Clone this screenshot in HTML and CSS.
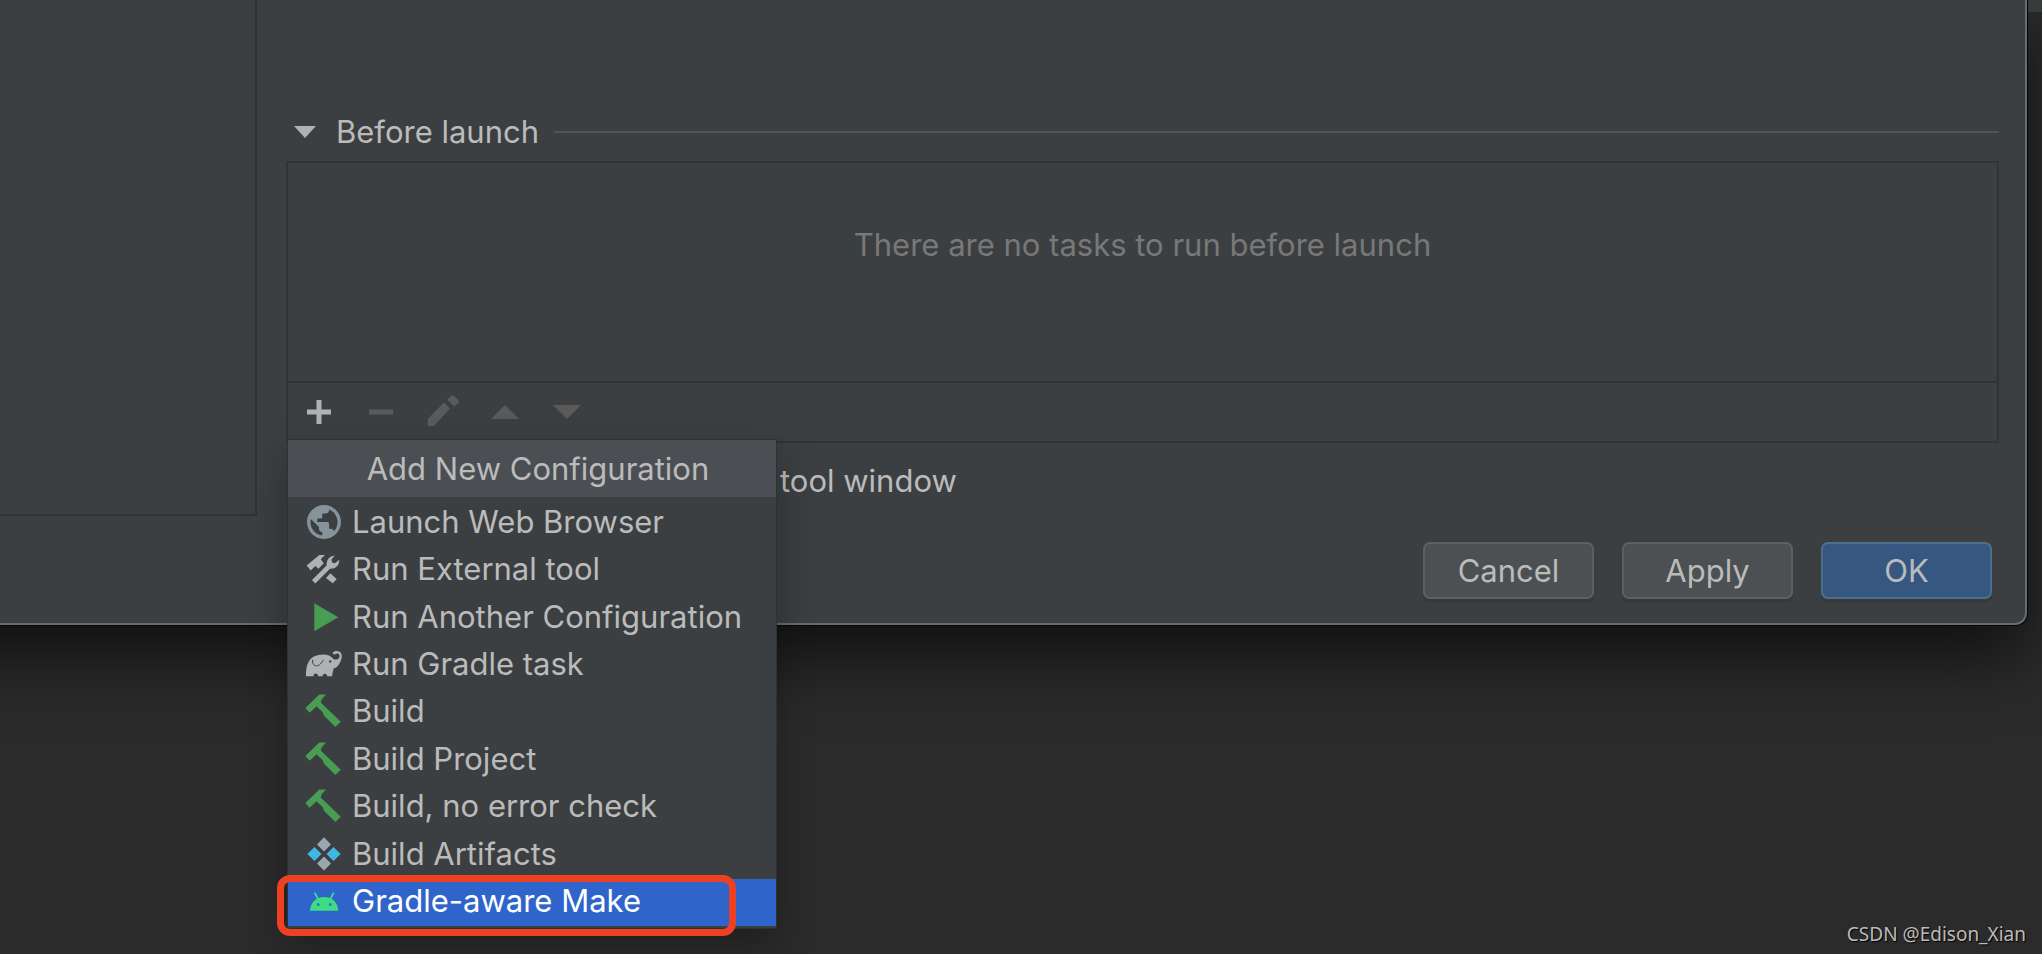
FILE: index.html
```html
<!DOCTYPE html>
<html lang="en">
<head>
    <meta charset="UTF-8">
    <meta name="viewport" content="width=device-width, initial-scale=1.0">
    <title>Run/Debug Configurations</title>
    <link rel="stylesheet" href="styles.css">
</head>
<body>

    <!-- Shared icons -->
    <svg class="sprite" aria-hidden="true">
        <symbol id="hammer" viewBox="0 0 38 38">
            <path d="M.3 16 14.3 2.4H21L16.5 7.6 15.7 10.4 25.7 20 35.7 29.7 30.3 35 19.3 24 17.5 20 11.5 14.3 4.6 20.7Z"/>
        </symbol>
    </svg>

    <main class="dialog">
        <div class="content">
            <div class="sidebar"></div>

            <div class="settings">
                <!-- Before launch -->
                <div class="section-title">
                    <svg class="arrow" viewBox="0 0 22 12"><path d="M0 0H22L11 12Z"/></svg>
                    <h2>Before launch</h2>
                    <span class="line"></span>
                </div>

                <div class="tasks">
                    <p class="empty">There are no tasks to run before launch</p>
                    <div class="toolbar">
                        <button class="tool" aria-label="Add">
                            <svg viewBox="0 0 38 38"><path d="M16.5 7h5v9.5H31v5h-9.5V31h-5v-9.5H7v-5h9.5Z"/></svg>
                        </button>
                        <button class="tool" aria-label="Remove" disabled>
                            <svg viewBox="0 0 38 38"><path d="M7 16.5H31v5H7Z"/></svg>
                        </button>
                        <button class="tool" aria-label="Edit" disabled>
                            <svg viewBox="0 0 38 38"><path d="M3.7 33V26L20 9.5 26 15.5 10 33ZM23 6.8 27 3Q28.5 2 30 3L34 6.5Q36 8.5 34 10L30.3 13.5Z"/></svg>
                        </button>
                        <button class="tool" aria-label="Up" disabled>
                            <svg viewBox="0 0 38 38"><path d="M5 26 19 12 33 26Z"/></svg>
                        </button>
                        <button class="tool" aria-label="Down" disabled>
                            <svg viewBox="0 0 38 38"><path d="M5 12H33L19 26Z"/></svg>
                        </button>

                        <!-- Add task popup -->
                        <div class="popup">
                            <div class="popup-title">Add New Configuration</div>
                            <div class="menu">
                                <button class="item">
                                    <svg class="globe" viewBox="0.8 0.8 22.4 22.4"><path d="M12 2C6.48 2 2 6.48 2 12s4.48 10 10 10 10-4.48 10-10S17.52 2 12 2zm-1 17.93c-3.95-.49-7-3.85-7-7.93 0-.62.08-1.21.21-1.79L9 15v1c0 1.1.9 2 2 2v1.93zm6.9-2.54c-.26-.81-1-1.39-1.9-1.39h-1v-3c0-.55-.45-1-1-1H8v-2h2c.55 0 1-.45 1-1V7h2c1.1 0 2-.9 2-2v-.41c2.93 1.19 5 4.06 5 7.41 0 2.08-.8 3.97-2.1 5.39z"/></svg>
                                    Launch Web Browser
                                </button>
                                <button class="item">
                                    <svg viewBox="0 0 38 38">
                                        <path d="M1.7 15.6 14.3 5H20L15.7 9.3 18.8 13.2 13.4 18.8 10.3 16 5.7 20.6ZM21 28 25.4 23.3 31.7 29.3 27.7 33.3Z"/>
                                        <path d="M7 30 21.6 15.4C21.4 10 24 6 29.8 5.4L26.5 9.5 27 12.5 30 13.3 34.2 9.8C34.6 15.5 30.5 19.2 25 18.8L10.3 33.5Z"/>
                                    </svg>
                                    Run External tool
                                </button>
                                <button class="item">
                                    <svg class="green" viewBox="0 0 38 38"><path d="M9.3 5.2 33.3 19.2 9.3 33.2Z"/></svg>
                                    Run Another Configuration
                                </button>
                                <button class="item">
                                    <svg viewBox="0 0 38 38">
                                        <path d="M1 31.3C.8 24.5 1.8 18 6 13.5 10 9.8 19 8.6 24 10.4 27 11.6 28 14.6 30.5 14.6 33.2 14.6 35 12.4 34.5 10.4 34 8.2 31.3 8 30.2 9.2 29 10 27.2 8.8 27.8 7.6 29 5.7 32.6 5.2 35 7 38 9.4 36.8 14 35 17.5 33.4 20.8 31.6 22.6 28.6 23.5L27 31.3H22.2C22.2 28 18 27.6 17.4 31.3H13.2C13 27.6 8.6 27.6 8.4 31.3Z"/>
                                        <path class="cut" d="M7.7 14.8C7 18 8.5 20.8 11.5 20.8 15 20.8 16.4 17.5 18.6 14.8"/>
                                        <circle class="dot" cx="25.2" cy="16.4" r="1.2"/>
                                    </svg>
                                    Run Gradle task
                                </button>
                                <button class="item"><svg class="green"><use href="#hammer"/></svg>Build</button>
                                <button class="item"><svg class="green"><use href="#hammer"/></svg>Build Project</button>
                                <button class="item"><svg class="green"><use href="#hammer"/></svg>Build, no error check</button>
                                <button class="item">
                                    <svg viewBox="0 0 38 38">
                                        <path class="grey" d="M19 2.3 26 9.4 19 16.5 12 9.4ZM19 21.5 26 28.4 19 35.5 12 28.4Z"/>
                                        <path class="blue" d="M9.5 12 16.5 19 9.5 26 2.3 19ZM28.5 12 35.6 19 28.5 26 21.5 19Z"/>
                                    </svg>
                                    Build Artifacts
                                </button>
                                <button class="item selected">
                                    <svg class="android" viewBox="0 0 38 38">
                                        <path d="M5 28.8C5.4 23.6 7.7 19.2 12 16.8L8.8 11 10.4 10.2 13.7 16C17.2 14.5 21.2 14.5 24.7 16L28 10.2 29.6 11 26.4 16.8C30.6 19.2 33 23.6 33.3 28.8Z"/>
                                        <path class="eyes" d="M12 21.3h2.4v2.4H12ZM24 21.3h2.4v2.4H24Z"/>
                                    </svg>
                                    Gradle-aware Make
                                </button>
                            </div>
                            <div class="marker"></div>
                        </div>
                    </div>
                </div>

                <p class="hint">tool window</p>
            </div>
        </div>

        <div class="footer">
            <button class="btn">Cancel</button>
            <button class="btn">Apply</button>
            <button class="btn primary">OK</button>
        </div>
    </main>

    <div class="watermark">CSDN @Edison_Xian</div>

</body>
</html>
```

FILE: styles.css
```css
* {
    margin: 0;
    padding: 0;
    box-sizing: border-box;
}
body {
    min-height: 100vh;
    display: flex;
    flex-direction: column;
    background: linear-gradient(#3c3f41 12px, #2b2b2b 12px);
    color: #bbbbbb;
    font-family: Inter, "Liberation Sans", sans-serif;
    font-size: 31px;
    line-height: 47px;
    overflow: hidden;
}
button {
    border: none;
    background: none;
    color: inherit;
    font: inherit;
}
svg {
    display: block;
    fill: #afb1b3;
}
.sprite {
    position: absolute;
    width: 0;
    height: 0;
}

/* Dialog, runs past the left edge of the window */
.dialog {
    margin: 0 15px 0 -100px;
    background: #3c3f41;
    border: solid #696b6c;
    border-width: 0 2px 2px 0;
    border-bottom-right-radius: 12px;
    box-shadow: 0 0 0 1px #080808, 0 30px 70px rgba(0, 0, 0, 0.65);
}
.content {
    display: flex;
}
.sidebar {
    width: 357px;
    border: solid #323232;
    border-width: 0 2px 2px 0;
}
.settings {
    flex: 1;
    padding: 108px 26px 12px 29px;
}
.section-title {
    display: flex;
    align-items: center;
    padding-left: 8px;
    margin-bottom: 6px;
}
.section-title h2 {
    margin: 0 15px 0 20px;
    font-size: 31px;
    font-weight: 400;
}
.arrow {
    width: 22px;
    height: 12px;
}
.line {
    flex: 1;
    height: 2px;
    background: #515355;
}
.tasks {
    border: 2px solid #323232;
}
.empty {
    height: 218px;
    padding-top: 58px;
    color: #787878;
    text-align: center;
}
.toolbar {
    position: relative;
    display: flex;
    align-items: center;
    height: 60px;
    border-top: 2px solid #323232;
}
.tool {
    display: flex;
    justify-content: center;
    width: 62px;
}
.tool svg {
    width: 38px;
    height: 38px;
}
.tool:disabled svg {
    fill: #5a5a5a;
}
.hint {
    padding: 14px 0 0 494px;
}

/* Popup menu */
.popup {
    position: absolute;
    top: 57px;
    left: 0;
    width: 488px;
    padding-bottom: 2px;
    background: #3c3f41;
    box-shadow: 0 0 0 1px #2f3132, 0 16px 36px rgba(0, 0, 0, 0.3);
}
.popup-title {
    height: 57px;
    padding: 5px 0 0 12px;
    background: #4b4e52;
    text-align: center;
}
.menu {
    display: grid;
    grid-auto-rows: 1fr;
    height: 429px;
    padding-top: 2px;
}
.item {
    display: flex;
    align-items: center;
    gap: 9px;
    padding: 0 0 2px 17px;
    line-height: 40px;
    text-align: left;
    white-space: nowrap;
}
.item svg {
    width: 38px;
    height: 38px;
}
.item.selected {
    background: #2f65ca;
    color: #ffffff;
}
.item .globe {
    fill: #87939a;
}
.item .green {
    fill: #499c54;
}
.item .android {
    fill: #3ddc84;
}
.grey {
    fill: #9aa7b0;
}
.blue {
    fill: #40b6e0;
}
.eyes {
    fill: #2f65ca;
}
.cut {
    fill: none;
    stroke: #3c3f41;
    stroke-width: 1;
}
.dot {
    fill: #3c3f41;
}
.marker {
    position: absolute;
    left: -11px;
    bottom: -8px;
    width: 459px;
    height: 61px;
    border: 7px solid #ee4023;
    border-radius: 13px;
}

/* Footer */
.footer {
    display: flex;
    justify-content: flex-end;
    gap: 28px;
    padding: 26px 33px 24px;
}
.btn {
    width: 171px;
    height: 57px;
    background: #4c5052;
    border: 2px solid #5e6060;
    border-radius: 7px;
    box-shadow: 0 4px 0 #37393a;
}
.btn.primary {
    background: #365880;
    border-color: #4c708c;
}
.watermark {
    margin: auto 16px 6px auto;
    font-family: "Noto Sans", sans-serif;
    font-size: 19px;
    line-height: 28px;
    text-shadow: 1px 1px 1px #000000;
}
```
